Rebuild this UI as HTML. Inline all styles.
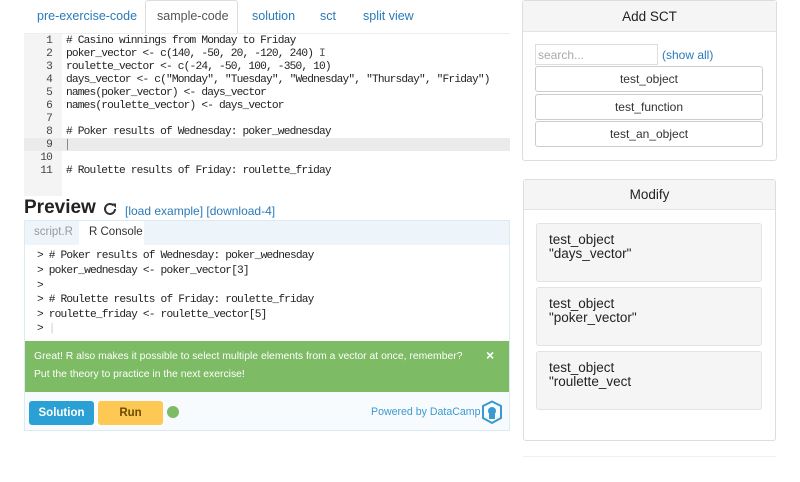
<!DOCTYPE html>
<html><head><style>
*{box-sizing:border-box;margin:0;padding:0}
body{width:800px;height:482px;background:#fff;font-family:"Liberation Sans",sans-serif;position:relative;overflow:hidden;color:#333}
.abs{position:absolute}
.tab{position:absolute;top:9px;font-size:12.5px;color:#2a7ab8}
.mono{font-family:"Liberation Mono",monospace;font-size:11.2px;letter-spacing:-0.83px;color:#222}
.cl{position:absolute;left:66px;white-space:pre;line-height:13px;margin-top:1px}
.ln{position:absolute;width:30px;text-align:right;left:22px;color:#444;line-height:13px;margin-top:1px}
.btn{position:absolute;left:535px;width:228px;height:26px;border:1px solid #ccc;border-radius:3px;text-align:center;font-size:12px;line-height:24px;color:#333;background:#fff}
.card{position:absolute;left:536px;width:226px;height:59px;background:#f5f5f5;border:1px solid #e3e3e3;border-radius:3px;padding:9px 12px;font-size:13.5px;line-height:14px;color:#222}
</style></head><body>
<div class="abs" style="left:145px;top:0;width:93px;height:34px;border:1px solid #ddd;border-bottom:none;border-radius:3px 3px 0 0;background:#fff"></div>
<div class="tab" style="left:37px">pre-exercise-code</div>
<div class="tab" style="left:157px;color:#555">sample-code</div>
<div class="tab" style="left:252px">solution</div>
<div class="tab" style="left:320px">sct</div>
<div class="tab" style="left:363px">split view</div>
<div class="abs" style="left:24px;top:33px;width:486px;height:1px;background:#eee"></div>
<div class="abs" style="left:24px;top:34px;width:38px;height:162px;background:#f4f4f4"></div>
<div class="abs" style="left:24px;top:138px;width:486px;height:13px;background:#ebebeb"></div>
<div class="abs" style="left:67px;top:139px;width:1px;height:11px;background:#888"></div>
<div class="mono">
<div class="ln" style="top:34px">1</div><div class="ln" style="top:47px">2</div><div class="ln" style="top:60px">3</div><div class="ln" style="top:73px">4</div><div class="ln" style="top:86px">5</div><div class="ln" style="top:99px">6</div><div class="ln" style="top:112px">7</div><div class="ln" style="top:125px">8</div><div class="ln" style="top:138px">9</div><div class="ln" style="top:151px">10</div><div class="ln" style="top:164px">11</div>
<div class="cl" style="top:34px"># Casino winnings from Monday to Friday</div>
<div class="cl" style="top:47px">poker_vector &lt;- c(140, -50, 20, -120, 240) <span style="color:#555">I</span></div>
<div class="cl" style="top:60px">roulette_vector &lt;- c(-24, -50, 100, -350, 10)</div>
<div class="cl" style="top:73px">days_vector &lt;- c("Monday", "Tuesday", "Wednesday", "Thursday", "Friday")</div>
<div class="cl" style="top:86px">names(poker_vector) &lt;- days_vector</div>
<div class="cl" style="top:99px">names(roulette_vector) &lt;- days_vector</div>
<div class="cl" style="top:125px"># Poker results of Wednesday: poker_wednesday</div>
<div class="cl" style="top:164px"># Roulette results of Friday: roulette_friday</div>
</div>
<div class="abs" style="left:24px;top:197px;font-size:19px;font-weight:bold;color:#222">Preview</div>
<svg class="abs" style="left:102px;top:201px" width="16" height="16" viewBox="0 0 16 16"><path d="M13 8a5 5 0 1 1-1.5-3.6" fill="none" stroke="#333" stroke-width="2"/><path d="M9.5 2.5h4.5v4.5z" fill="#333"/></svg>
<div class="abs" style="left:125px;top:204px;font-size:12px;color:#2a7ab8">[load example] [download-4]</div>
<div class="abs" style="left:24px;top:220px;width:486px;height:211px;border:1px solid #dbeaf3"></div>
<div class="abs" style="left:25px;top:221px;width:484px;height:24px;background:#eef5fa"></div>
<div class="abs" style="left:79px;top:221px;width:65px;height:24px;background:#fff"></div>
<div class="abs" style="left:34px;top:226px;font-size:11.5px;color:#999">script.R</div>
<div class="abs" style="left:89px;top:226px;font-size:11.5px;color:#333">R Console</div>
<div class="mono">
<div class="cl" style="left:37px;top:249px">&gt; # Poker results of Wednesday: poker_wednesday</div>
<div class="cl" style="left:37px;top:264px">&gt; poker_wednesday &lt;- poker_vector[3]</div>
<div class="cl" style="left:37px;top:279px">&gt;</div>
<div class="cl" style="left:37px;top:293px">&gt; # Roulette results of Friday: roulette_friday</div>
<div class="cl" style="left:37px;top:308px">&gt; roulette_friday &lt;- roulette_vector[5]</div>
<div class="cl" style="left:37px;top:322px">&gt; <span style="color:#ccc">|</span></div>
</div>
<div class="abs" style="left:25px;top:341px;width:484px;height:51px;background:#7dbb64;color:#fff;font-size:10.4px;line-height:18px;padding:7px 9px">Great! R also makes it possible to select multiple elements from a vector at once, remember?<br>Put the theory to practice in the next exercise!</div>
<div class="abs" style="left:486px;top:347px;color:#fff;font-size:14px;font-weight:bold">×</div>
<div class="abs" style="left:25px;top:392px;width:484px;height:38px;background:#f7fbfd"></div>
<div class="abs" style="left:29px;top:401px;width:65px;height:24px;background:#2aa0d4;border-radius:3px;color:#fff;font-size:11.5px;font-weight:bold;text-align:center;line-height:24px">Solution</div>
<div class="abs" style="left:98px;top:401px;width:65px;height:24px;background:#fdc854;border-radius:3px;color:#6a4b00;font-size:11.5px;font-weight:bold;text-align:center;line-height:24px">Run</div>
<div class="abs" style="left:167px;top:406px;width:12px;height:12px;border-radius:50%;background:#7dbb64"></div>
<div class="abs" style="left:371px;top:406px;font-size:10.6px;color:#3a9ad0">Powered by DataCamp</div>
<svg class="abs" style="left:481px;top:400px" width="22" height="25" viewBox="0 0 22 25"><path d="M11 1.5L20 6v12l-9 5-9-5V6z" fill="none" stroke="#3a9ad0" stroke-width="2"/><circle cx="11" cy="11" r="4" fill="#3a9ad0"/><path d="M8 14v5h6v-5" fill="#3a9ad0"/></svg>

<div class="abs" style="left:522px;top:0;width:255px;height:161px;border:1px solid #ddd;border-radius:3px"></div>
<div class="abs" style="left:523px;top:1px;width:253px;height:31px;background:#f5f5f5;border-bottom:1px solid #e3e3e3;text-align:center;font-size:13.5px;line-height:31px;color:#222">Add SCT</div>
<div class="abs" style="left:535px;top:44px;width:123px;height:21px;border:1px solid #ddd;font-size:12px;color:#aaa;padding:3px 2px">search...</div>
<div class="abs" style="left:662px;top:48px;font-size:12px;color:#2a7ab8">(show all)</div>
<div class="btn" style="top:66px">test_object</div>
<div class="btn" style="top:94px">test_function</div>
<div class="btn" style="top:121px">test_an_object</div>
<div class="abs" style="left:523px;top:179px;width:253px;height:262px;border:1px solid #ddd;border-radius:3px"></div>
<div class="abs" style="left:524px;top:180px;width:251px;height:30px;background:#f5f5f5;border-bottom:1px solid #e3e3e3;text-align:center;font-size:13.5px;line-height:30px;color:#222">Modify</div>
<div class="card" style="top:223px">test_object<br>"days_vector"</div>
<div class="card" style="top:287px">test_object<br>"poker_vector"</div>
<div class="card" style="top:351px">test_object<br>"roulette_vect</div>
<div class="abs" style="left:523px;top:456px;width:253px;height:1px;background:#f0f0f0"></div>
</body></html>
